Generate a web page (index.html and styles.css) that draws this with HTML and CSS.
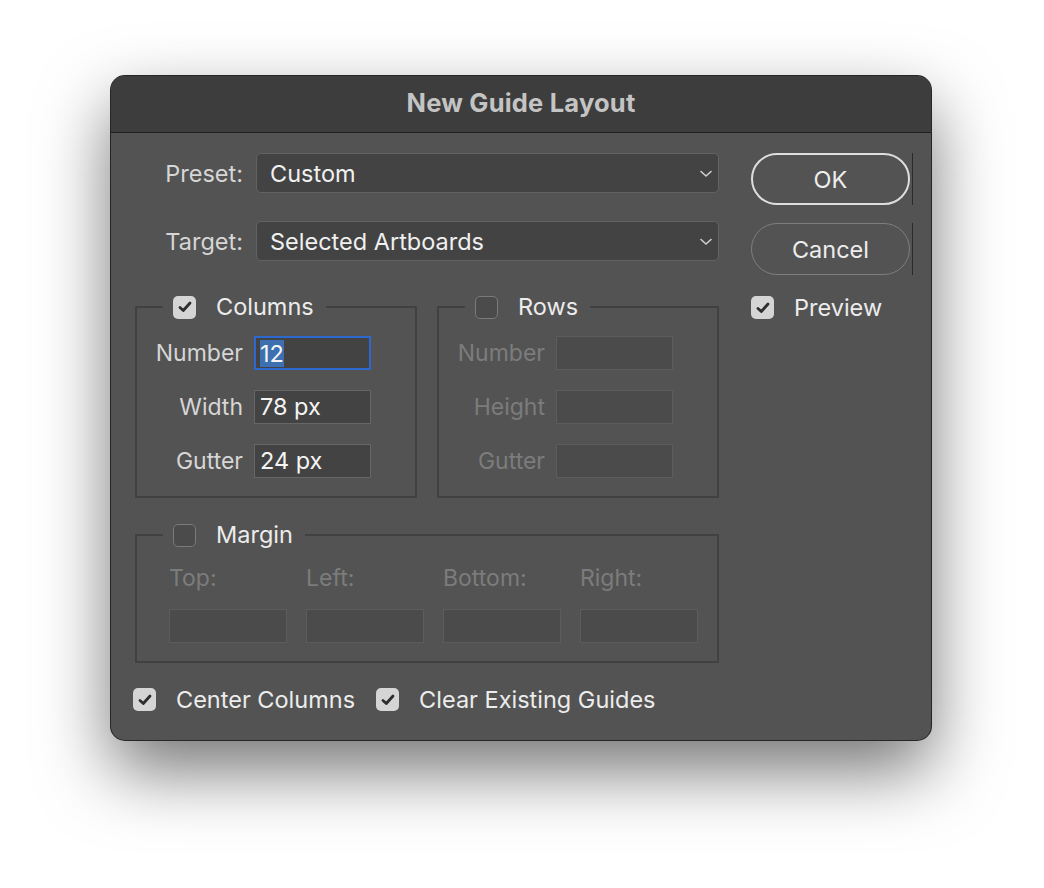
FILE: index.html
```html
<!DOCTYPE html>
<html lang="en">
  <head>
    <meta charset="UTF-8" />
    <meta name="viewport" content="width=device-width, initial-scale=1.0" />
    <title>New Guide Layout</title>
    <link rel="stylesheet" href="styles.css">
  </head>
  <body>
    <div class="dialog">
      <div class="title-bar">New Guide Layout</div>
      <div class="dialog-body">
        <div class="main-col">
          <div class="field-row">
            <label class="row-label">Preset:</label>
            <div class="select">
              <span>Custom</span>
              <svg class="chevron" width="12" height="8" viewBox="0 0 12 8"><path d="M1 1.5 L6 6 L11 1.5" fill="none" stroke="#d0d0d0" stroke-width="1.6" stroke-linecap="round" stroke-linejoin="round"/></svg>
            </div>
          </div>
          <div class="field-row">
            <label class="row-label">Target:</label>
            <div class="select">
              <span>Selected Artboards</span>
              <svg class="chevron" width="12" height="8" viewBox="0 0 12 8"><path d="M1 1.5 L6 6 L11 1.5" fill="none" stroke="#d0d0d0" stroke-width="1.6" stroke-linecap="round" stroke-linejoin="round"/></svg>
            </div>
          </div>

          <div class="groups">
            <fieldset class="group">
              <legend class="group-head">
                <span class="check checked"><svg width="14" height="12" viewBox="0 0 14 12"><path d="M2 6.5 L5.3 9.5 L12 2" fill="none" stroke="#2e2e2e" stroke-width="2.8" stroke-linecap="round" stroke-linejoin="round"/></svg></span>
                <span class="head-text">Columns</span>
              </legend>
              <div class="group-rows">
                <div class="num-row">
                  <span class="num-label">Number</span>
                  <div class="num-input focused"><span class="sel">12</span></div>
                </div>
                <div class="num-row">
                  <span class="num-label">Width</span>
                  <div class="num-input">78 px</div>
                </div>
                <div class="num-row">
                  <span class="num-label">Gutter</span>
                  <div class="num-input">24 px</div>
                </div>
              </div>
            </fieldset>

            <fieldset class="group">
              <legend class="group-head">
                <span class="check"></span>
                <span class="head-text">Rows</span>
              </legend>
              <div class="group-rows">
                <div class="num-row off">
                  <span class="num-label">Number</span>
                  <div class="num-input"></div>
                </div>
                <div class="num-row off">
                  <span class="num-label">Height</span>
                  <div class="num-input"></div>
                </div>
                <div class="num-row off">
                  <span class="num-label">Gutter</span>
                  <div class="num-input"></div>
                </div>
              </div>
            </fieldset>
          </div>

          <fieldset class="group margin-group">
            <legend class="group-head">
              <span class="check"></span>
              <span class="head-text">Margin</span>
            </legend>
            <div class="margin-grid">
              <div class="margin-cell">
                <span class="margin-label">Top:</span>
                <div class="num-input off-input"></div>
              </div>
              <div class="margin-cell">
                <span class="margin-label">Left:</span>
                <div class="num-input off-input"></div>
              </div>
              <div class="margin-cell">
                <span class="margin-label">Bottom:</span>
                <div class="num-input off-input"></div>
              </div>
              <div class="margin-cell">
                <span class="margin-label">Right:</span>
                <div class="num-input off-input"></div>
              </div>
            </div>
          </fieldset>

          <div class="bottom-row">
            <span class="check checked"><svg width="14" height="12" viewBox="0 0 14 12"><path d="M2 6.5 L5.3 9.5 L12 2" fill="none" stroke="#2e2e2e" stroke-width="2.8" stroke-linecap="round" stroke-linejoin="round"/></svg></span>
            <span class="bottom-text">Center Columns</span>
            <span class="check checked"><svg width="14" height="12" viewBox="0 0 14 12"><path d="M2 6.5 L5.3 9.5 L12 2" fill="none" stroke="#2e2e2e" stroke-width="2.8" stroke-linecap="round" stroke-linejoin="round"/></svg></span>
            <span class="bottom-text">Clear Existing Guides</span>
          </div>
        </div>

        <div class="side-col">
          <div class="btn-wrap"><button class="btn btn-ok">OK</button></div>
          <div class="btn-wrap"><button class="btn">Cancel</button></div>
          <div class="preview">
            <span class="check checked"><svg width="14" height="12" viewBox="0 0 14 12"><path d="M2 6.5 L5.3 9.5 L12 2" fill="none" stroke="#2e2e2e" stroke-width="2.8" stroke-linecap="round" stroke-linejoin="round"/></svg></span>
            <span class="preview-text">Preview</span>
          </div>
        </div>
      </div>
    </div>
  </body>
</html>
```

FILE: styles.css
```css
html {
  margin: 0;
  padding: 0;
  background: #fff;
}
body {
  margin: 0;
  padding-top: 76px;
  min-height: 888px;
  box-sizing: border-box;
  background: #fff;
  font-family: Inter, "Liberation Sans", sans-serif;
}
.dialog {
  width: 820px;
  margin-left: 111px;
  border-radius: 14px;
  background: #535353;
  box-shadow: 0 0 0 1px #262626, 0 30px 70px rgba(0, 0, 0, 0.55);
  overflow: hidden;
}
.title-bar {
  height: 56px;
  line-height: 54px;
  background: #3d3d3d;
  border-bottom: 1px solid #1f1f1f;
  text-align: center;
  color: #c4c4c4;
  font-weight: 700;
  font-size: 25.5px;
  letter-spacing: 0.2px;
}
.dialog-body {
  display: flex;
  padding: 20px 0 0 24px;
  height: 607px;
  box-sizing: border-box;
}
.main-col {
  width: 584px;
}
.side-col {
  margin-left: 32px;
  width: 170px;
}

/* preset / target */
.field-row {
  display: flex;
  align-items: center;
  margin-bottom: 28px;
}
.row-label {
  width: 108px;
  text-align: right;
  color: #d6d6d6;
  font-size: 23.5px;
  margin-right: 13px;
}
.select {
  flex: 1;
  height: 40px;
  box-sizing: border-box;
  border: 1.5px solid #626262;
  border-radius: 5px;
  background: #434343;
  display: flex;
  align-items: center;
  justify-content: space-between;
  padding: 0 6px 0 13px;
  color: #f0f0f0;
  font-size: 23.5px;
}
.chevron {
  margin-top: 2px;
}

/* checkbox */
.check {
  width: 23px;
  height: 23px;
  box-sizing: border-box;
  border-radius: 5px;
  display: inline-flex;
  align-items: center;
  justify-content: center;
  border: 1.5px solid #7a7a7a;
  background: #4b4b4b;
  flex: none;
}
.check.checked {
  border: none;
  background: #d5d5d5;
}

/* groups */
.groups {
  display: flex;
  gap: 20px;
  margin-top: 34px;
}
.group {
  margin: 0;
  padding: 0;
  min-width: 0;
  border: 2px solid #414141;
  width: 282px;
  box-sizing: border-box;
}
.group-head {
  margin-left: 26px;
  padding: 0 12px 0 10px;
  height: 24px;
  display: flex;
  align-items: center;
}
.head-text {
  margin-left: 20px;
  color: #ececec;
  font-size: 23.5px;
  line-height: 24px;
}
.group-rows {
  padding: 17px 0 18px;
  display: flex;
  flex-direction: column;
  gap: 20px;
}
.num-row {
  display: flex;
  align-items: center;
}
.num-label {
  width: 106px;
  text-align: right;
  color: #d6d6d6;
  font-size: 23px;
  margin-right: 11px;
}
.num-input {
  width: 117px;
  height: 34px;
  box-sizing: border-box;
  border: 1.5px solid #666;
  background: #434343;
  color: #f4f4f4;
  font-size: 23.5px;
  line-height: 31px;
  padding-left: 5px;
}
.num-input.focused {
  border: 2px solid #2d68cf;
  padding-left: 4px;
  line-height: 30px;
}
.sel {
  display: inline-block;
  background: #3d70b0;
  height: 27px;
  line-height: 28px;
  vertical-align: middle;
  margin-top: -3px;
}
.num-row.off .num-label {
  color: #7c7c7c;
}
.num-row.off .num-input,
.off-input {
  border-color: #5c5c5c;
  background: #4b4b4b;
}

/* margin */
.margin-group {
  width: 584px;
  margin-top: 25px;
}
.margin-grid {
  display: flex;
  gap: 19px;
  padding: 19px 0 18px 32px;
}
.margin-cell {
  display: flex;
  flex-direction: column;
}
.margin-label {
  color: #7c7c7c;
  font-size: 23px;
  line-height: 24px;
  margin-bottom: 19px;
}
.margin-cell .num-input {
  width: 118px;
}

/* bottom */
.bottom-row {
  display: flex;
  align-items: center;
  margin-top: 22px;
  margin-left: -2px;
}
.bottom-text {
  color: #ececec;
  font-size: 23.5px;
  margin-left: 20px;
  margin-right: 21px;
}

/* buttons */
.btn-wrap {
  display: flex;
  align-items: center;
  height: 52px;
  margin-bottom: 18px;
  border-right: 1.5px solid #2a2a2a;
  width: 161px;
}
.btn {
  width: 159px;
  height: 52px;
  border-radius: 26px;
  background: transparent;
  border: 1.5px solid #7e7e7e;
  color: #ededed;
  font-family: Inter, "Liberation Sans", sans-serif;
  font-size: 23.5px;
}
.btn-ok {
  border: 2px solid #dedede;
}
.preview {
  display: flex;
  align-items: center;
  margin-top: 18px;
}
.preview-text {
  margin-left: 20px;
  color: #ececec;
  font-size: 23.5px;
}
```
